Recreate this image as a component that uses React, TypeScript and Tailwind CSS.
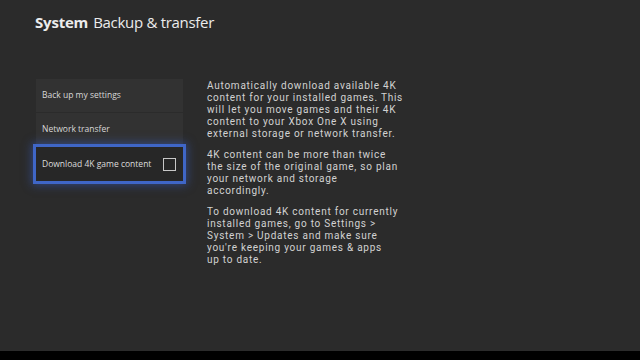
const font = { fontFamily: '"Open Sans", "Noto Sans", sans-serif' };
const bodyFont = { fontFamily: 'Roboto, "Open Sans", sans-serif' };

const items = ["Back up my settings", "Network transfer"];

const paragraphs = [
  [
    "Automatically download available 4K",
    "content for your installed games. This",
    "will let you move games and their 4K",
    "content to your Xbox One X using",
    "external storage or network transfer.",
  ],
  [
    "4K content can be more than twice",
    "the size of the original game, so plan",
    "your network and storage",
    "accordingly.",
  ],
  [
    "To download 4K content for currently",
    "installed games, go to Settings >",
    "System > Updates and make sure",
    "you're keeping your games & apps",
    "up to date.",
  ],
];

export default function App() {
  return (
    <div className="w-[640px] h-[360px] flex flex-col bg-black overflow-hidden" style={font}>
      <div className="flex-1 bg-[#2b2b2b] flex flex-col">
        {/* Header */}
        <div className="pl-[35px] pt-[12px] flex items-baseline gap-[5px] text-[#ececec] text-[15px] leading-[20px]">
          <span className="font-bold tracking-[-0.2px]">System</span>
          <span className="tracking-[-0.3px]">Backup &amp; transfer</span>
        </div>

        <div className="flex pl-[36px] pt-[47px] gap-[24px]">
          {/* Menu */}
          <div className="w-[147px] flex flex-col">
            {items.map((label) => (
              <div
                key={label}
                className="h-[34px] flex items-center pl-[6px] bg-[#323232] border-b border-[#2b2b2b] text-[8.5px] text-[#d8d8d8]"
              >
                {label}
              </div>
            ))}
            <div className="h-[34px] outline-[3px] outline-solid outline-[#3f66c7] shadow-[0_0_9px_4px_rgba(56,98,210,0.5)] bg-[#272727] flex items-center justify-between pl-[6px] pr-[7px] text-[8.5px] text-[#dcdcdc]">
              <span>Download 4K game content</span>
              <span className="w-[13px] h-[13px] border-[1.5px] border-[#c8c8c8]" />
            </div>
          </div>

          {/* Description */}
          <div
            className="text-[10px] leading-[12px] tracking-[0.75px] text-[#d2d2d2] flex flex-col gap-[9px] pt-[1px]"
            style={bodyFont}
          >
            {paragraphs.map((lines, i) => (
              <p key={i}>
                {lines.map((l) => (
                  <span key={l} className="block whitespace-nowrap">
                    {l}
                  </span>
                ))}
              </p>
            ))}
          </div>
        </div>
      </div>
      <div className="h-[9px] bg-black" />
    </div>
  );
}
